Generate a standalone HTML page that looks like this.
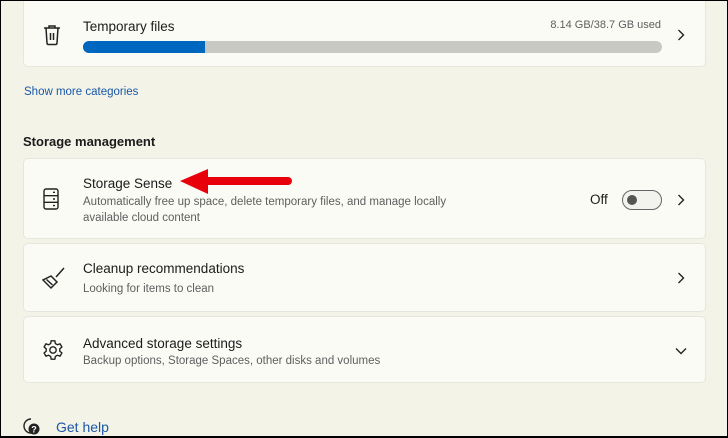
<!DOCTYPE html>
<html><head><style>
body{margin:0;width:728px;height:438px;overflow:hidden;background:#000;font-family:"Liberation Sans",sans-serif;}
#f{position:absolute;left:1px;top:1px;width:726px;height:435px;background:#f3f3e8;overflow:hidden}
.card{position:absolute;left:22px;width:683px;background:#fbfbf6;border:1px solid #e6e6dd;border-radius:5px;box-sizing:border-box}
.t{position:absolute;left:59px;font-size:13.5px;color:#1b1b1b}
.s{position:absolute;left:59px;font-size:11.5px;color:#5e5e5e;line-height:16px}
.chev{position:absolute;right:18px}
svg{position:absolute}
</style></head><body><div id="f">
<div class="card" style="top:-6px;height:72px">
 <svg style="left:18px;top:28px" width="20" height="22" viewBox="0 0 20 22" fill="none" stroke="#222" stroke-width="1.5"><path d="M2 4h16M7 4V2h6v2M4 4l1 15q0 1.5 1.5 1.5h7q1.5 0 1.5-1.5L16 4M8.5 9v7M11.5 9v7"/></svg>
 <div class="t" style="top:23px">Temporary files</div>
 <div style="position:absolute;left:59px;top:45px;width:579px;height:12px;border-radius:6px;background:#c9c9c3;overflow:hidden"><div style="width:122px;height:12px;background:#0067c0"></div></div>
 <div style="position:absolute;right:44px;top:23px;font-size:11px;color:#5e5e5e">8.14 GB/38.7 GB used</div>
 <svg class="chev" style="right:20px;top:33px" width="8" height="12" viewBox="0 0 8 12" fill="none" stroke="#222" stroke-width="1.4"><path d="M1.5 1l5 5-5 5"/></svg>
</div>
<div style="position:absolute;left:23px;top:85px;font-size:11.5px;color:#1a57a7">Show more categories</div>
<div style="position:absolute;left:22px;top:133px;font-size:13px;font-weight:bold;color:#1b1b1b">Storage management</div>
<div class="card" style="top:157px;height:81px">
 <svg style="left:19px;top:29px" width="16" height="22" viewBox="0 0 16 22" fill="none" stroke="#222" stroke-width="1.4"><rect x="1" y="1" width="14" height="20" rx="2"/><path d="M1 7.7h14M1 14.3h14M10 4.3h2M10 11h2M10 17.6h2"/></svg>
 <div class="t" style="top:17px">Storage Sense</div>
 <div class="s" style="top:35px">Automatically free up space, delete temporary files, and manage locally<br>available cloud content</div>
 <div style="position:absolute;left:566px;top:33px;font-size:13.5px;color:#1b1b1b">Off</div>
 <div style="position:absolute;left:598px;top:31px;width:40px;height:20px;border:1px solid #666;border-radius:10px;box-sizing:border-box;background:#f2f2ee"><div style="position:absolute;left:4px;top:4px;width:10px;height:10px;border-radius:50%;background:#555"></div></div>
 <svg class="chev" style="right:20px;top:35px" width="8" height="12" viewBox="0 0 8 12" fill="none" stroke="#222" stroke-width="1.4"><path d="M1.5 1l5 5-5 5"/></svg>
</div>
<svg style="left:179px;top:167px" width="112" height="28" viewBox="0 0 112 28"><path d="M0 13L28 1V9H108a4 4 0 0 1 0 8H28v9z" fill="#e8000b"/></svg>
<div class="card" style="top:242px;height:69px">
 <svg style="left:18px;top:22px" width="24" height="24" viewBox="0 0 24 24" fill="none" stroke="#222" stroke-width="1.5"><path d="M22 2l-8 9M9 10l6 6-6 6-8-8zM4.5 13.5l6 5.5"/></svg>
 <div class="t" style="top:17px">Cleanup recommendations</div>
 <div class="s" style="top:37px">Looking for items to clean</div>
 <svg class="chev" style="right:20px;top:28px" width="8" height="12" viewBox="0 0 8 12" fill="none" stroke="#222" stroke-width="1.4"><path d="M1.5 1l5 5-5 5"/></svg>
</div>
<div class="card" style="top:315px;height:67px">
 <svg style="left:18px;top:22px" width="22" height="22" viewBox="0 0 24 24" fill="none" stroke="#222" stroke-width="1.5"><circle cx="12" cy="12" r="3.5"/><path d="M10 2h4l.6 3 2.2 1.3 2.9-1 2 3.4-2.3 2v2.6l2.3 2-2 3.4-2.9-1L14.6 19 14 22h-4l-.6-3-2.2-1.3-2.9 1-2-3.4 2.3-2v-2.6l-2.3-2 2-3.4 2.9 1L9.4 5z"/></svg>
 <div class="t" style="top:19px">Advanced storage settings</div>
 <div class="s" style="top:36px">Backup options, Storage Spaces, other disks and volumes</div>
 <svg class="chev" style="right:18px;top:30px" width="12" height="8" viewBox="0 0 12 8" fill="none" stroke="#222" stroke-width="1.4"><path d="M1 1.5l5 5 5-5"/></svg>
</div>
<svg style="left:22px;top:417px" width="18" height="18" viewBox="0 0 18 18"><path d="M8 1a7 7 0 1 0 0 14" fill="none" stroke="#222" stroke-width="1.4"/><circle cx="11" cy="11" r="5.5" fill="#222"/><text x="11" y="14.5" font-size="9" fill="#fff" text-anchor="middle" font-family="Liberation Sans" font-weight="bold">?</text></svg>
<div style="position:absolute;left:55px;top:418px;font-size:14px;color:#1a57a7">Get help</div>
</div></body></html>
